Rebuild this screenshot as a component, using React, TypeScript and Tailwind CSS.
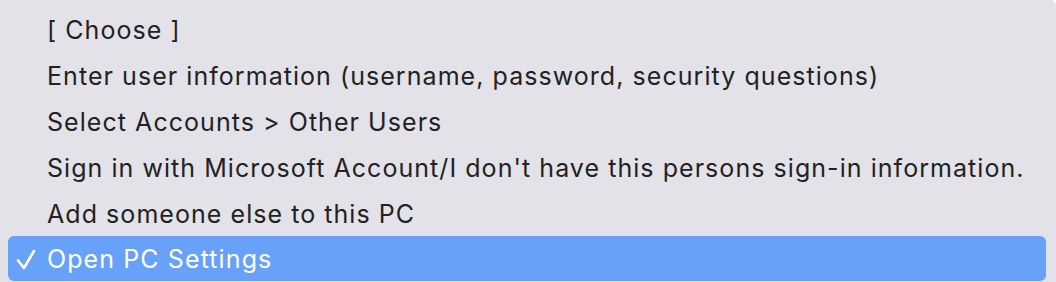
import React from "react";

const items = [
  "[ Choose ]",
  "Enter user information (username, password, security questions)",
  "Select Accounts > Other Users",
  "Sign in with Microsoft Account/I don't have this persons sign-in information.",
  "Add someone else to this PC",
];

export default function App() {
  return (
    <div
      className="w-[1056px] h-[282px] overflow-hidden bg-[#e3e2e8] pt-[7px] rounded-tr-[6px]"
      style={{ fontFamily: "Inter, 'Noto Sans', sans-serif" }}
    >
      {items.map((t) => (
        <div key={t} className="h-[46px] flex items-center pl-[47px] pt-[2px] text-[25px] text-[#222222] tracking-[1.05px]">
          {t}
        </div>
      ))}
      <div className="h-[45px] -mt-[1px] ml-2 mr-[10px] rounded-[6px] bg-[#68a1f8] flex items-center pt-[2px] text-white text-[25px] tracking-[1.1px]">
        <svg width="39" height="45" viewBox="0 0 39 45" className="shrink-0 -mt-[2px]">
          <polyline
            points="10,24.5 16,32 26,15"
            fill="none"
            stroke="white"
            strokeWidth="2.6"
            strokeLinecap="round"
            strokeLinejoin="round"
          />
        </svg>
        <span>Open PC Settings</span>
      </div>
    </div>
  );
}
